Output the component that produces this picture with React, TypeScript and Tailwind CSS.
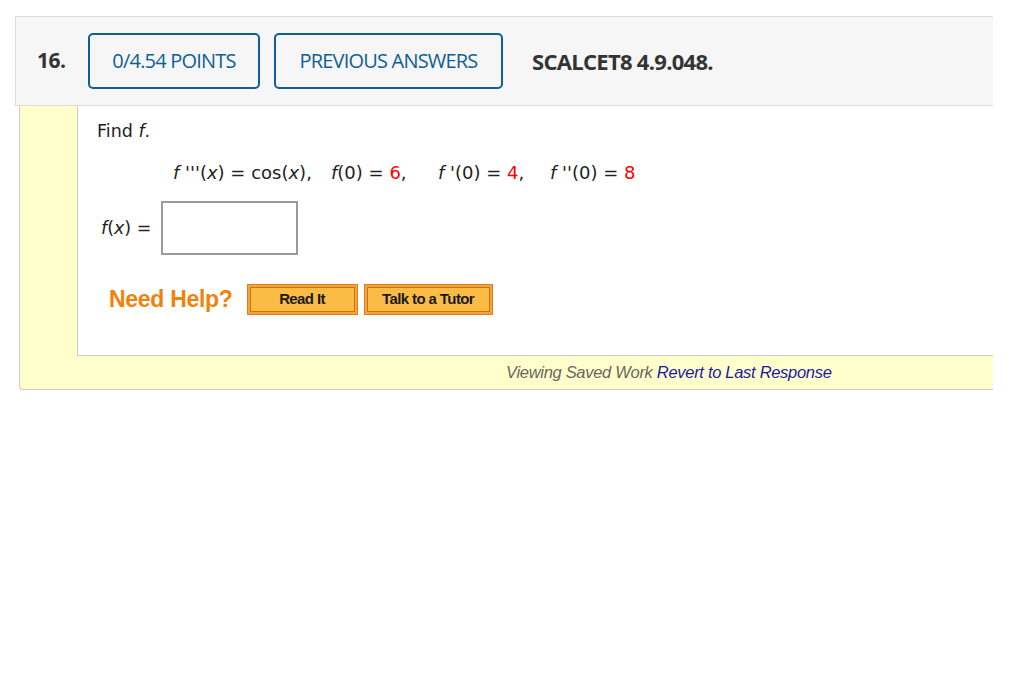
import React from "react";

const sans = { fontFamily: '"Open Sans", "Noto Sans", sans-serif' };
const arial = { fontFamily: '"Liberation Sans", Arial, sans-serif' };
const verdana = { fontFamily: '"DejaVu Sans", Verdana, sans-serif' };

function HelpButton({ label, width }: { label: string; width: string }) {
  return (
    <div className={`h-[31px] ${width} border border-[#d9801c] bg-[#f5a33a] p-[2px]`}>
      <div className="h-full w-full border border-[#c97410] bg-[#fbbc45] flex items-center justify-center">
        <span className="text-[15px] font-bold text-[#1a1a1a] tracking-[-0.6px]" style={arial}>
          {label}
        </span>
      </div>
    </div>
  );
}

export default function App() {
  return (
    <div className="w-[1024px] h-[683px] bg-white overflow-hidden">
      <div className="pt-[16px] pl-[15px]">
        {/* header */}
        <div
          className="w-[978px] h-[90px] bg-[#f6f6f6] border-t border-b border-l border-[#dddddd] flex items-center"
          style={sans}
        >
          <div className="pl-[21px] w-[72px] text-[21px] font-bold text-[#333] tracking-[-0.5px]">16.</div>
          <div className="h-[56px] w-[172px] border-2 border-[#0f5f96] rounded-[5px] flex items-center justify-center text-[20px] font-[500] text-[#0f5f96] tracking-[-0.8px]">
            0/4.54 POINTS
          </div>
          <div className="ml-[14px] h-[56px] w-[229px] border-2 border-[#0f5f96] rounded-[5px] flex items-center justify-center text-[20px] font-[500] text-[#0f5f96] tracking-[-0.8px]">
            PREVIOUS ANSWERS
          </div>
          <div className="ml-[29px] text-[22px] font-bold text-[#333] tracking-[-0.7px]">SCALCET8 4.9.048.</div>
        </div>

        {/* body */}
        <div className="ml-[4px] w-[974px] bg-[#ffffcc] border-l border-b border-[#cccccc] rounded-bl-[4px] pl-[57px]">
          <div className="bg-white border-l border-b border-[#cccccc] h-[250px] pl-[19px] pt-[13px]" style={verdana}>
            <div className="text-[17.5px] leading-[24px] text-[#222]">
              Find <i>f</i>.
            </div>
            <div className="mt-[18px] ml-[76px] flex text-[18px] leading-[24px] text-[#222] whitespace-pre">
              <span className="w-[158px]">
                <i>f</i> '''(<i>x</i>) = cos(<i>x</i>),
              </span>
              <span className="w-[107px]">
                <i>f</i>(0) = <span className="text-[#ff0000]">6</span>,
              </span>
              <span className="w-[112px]">
                <i>f</i> '(0) = <span className="text-[#ff0000]">4</span>,
              </span>
              <span>
                <i>f</i> ''(0) = <span className="text-[#ff0000]">8</span>
              </span>
            </div>
            <div className="mt-[16px] flex items-center">
              <div className="ml-[4px] text-[17.5px] text-[#222] w-[60px]">
                <i>f</i>(<i>x</i>) =
              </div>
              <div className="w-[137px] h-[54px] border-2 border-[#9a9a9a] bg-white" />
            </div>
            <div className="mt-[27px] flex items-center">
              <div className="ml-[12px] text-[23px] font-bold text-[#f0820a] tracking-[-0.3px]" style={arial}>
                Need Help?
              </div>
              <div className="ml-[14px] flex gap-[6px]">
                <HelpButton label="Read It" width="w-[111px]" />
                <HelpButton label="Talk to a Tutor" width="w-[129px]" />
              </div>
            </div>
          </div>
          <div className="h-[33px] flex items-center pl-[429px]">
            <span className="italic text-[16.5px] text-[#666] tracking-[-0.3px]" style={arial}>
              Viewing Saved Work <span className="text-[#1a1aa8]">Revert to Last Response</span>
            </span>
          </div>
        </div>
      </div>
    </div>
  );
}
